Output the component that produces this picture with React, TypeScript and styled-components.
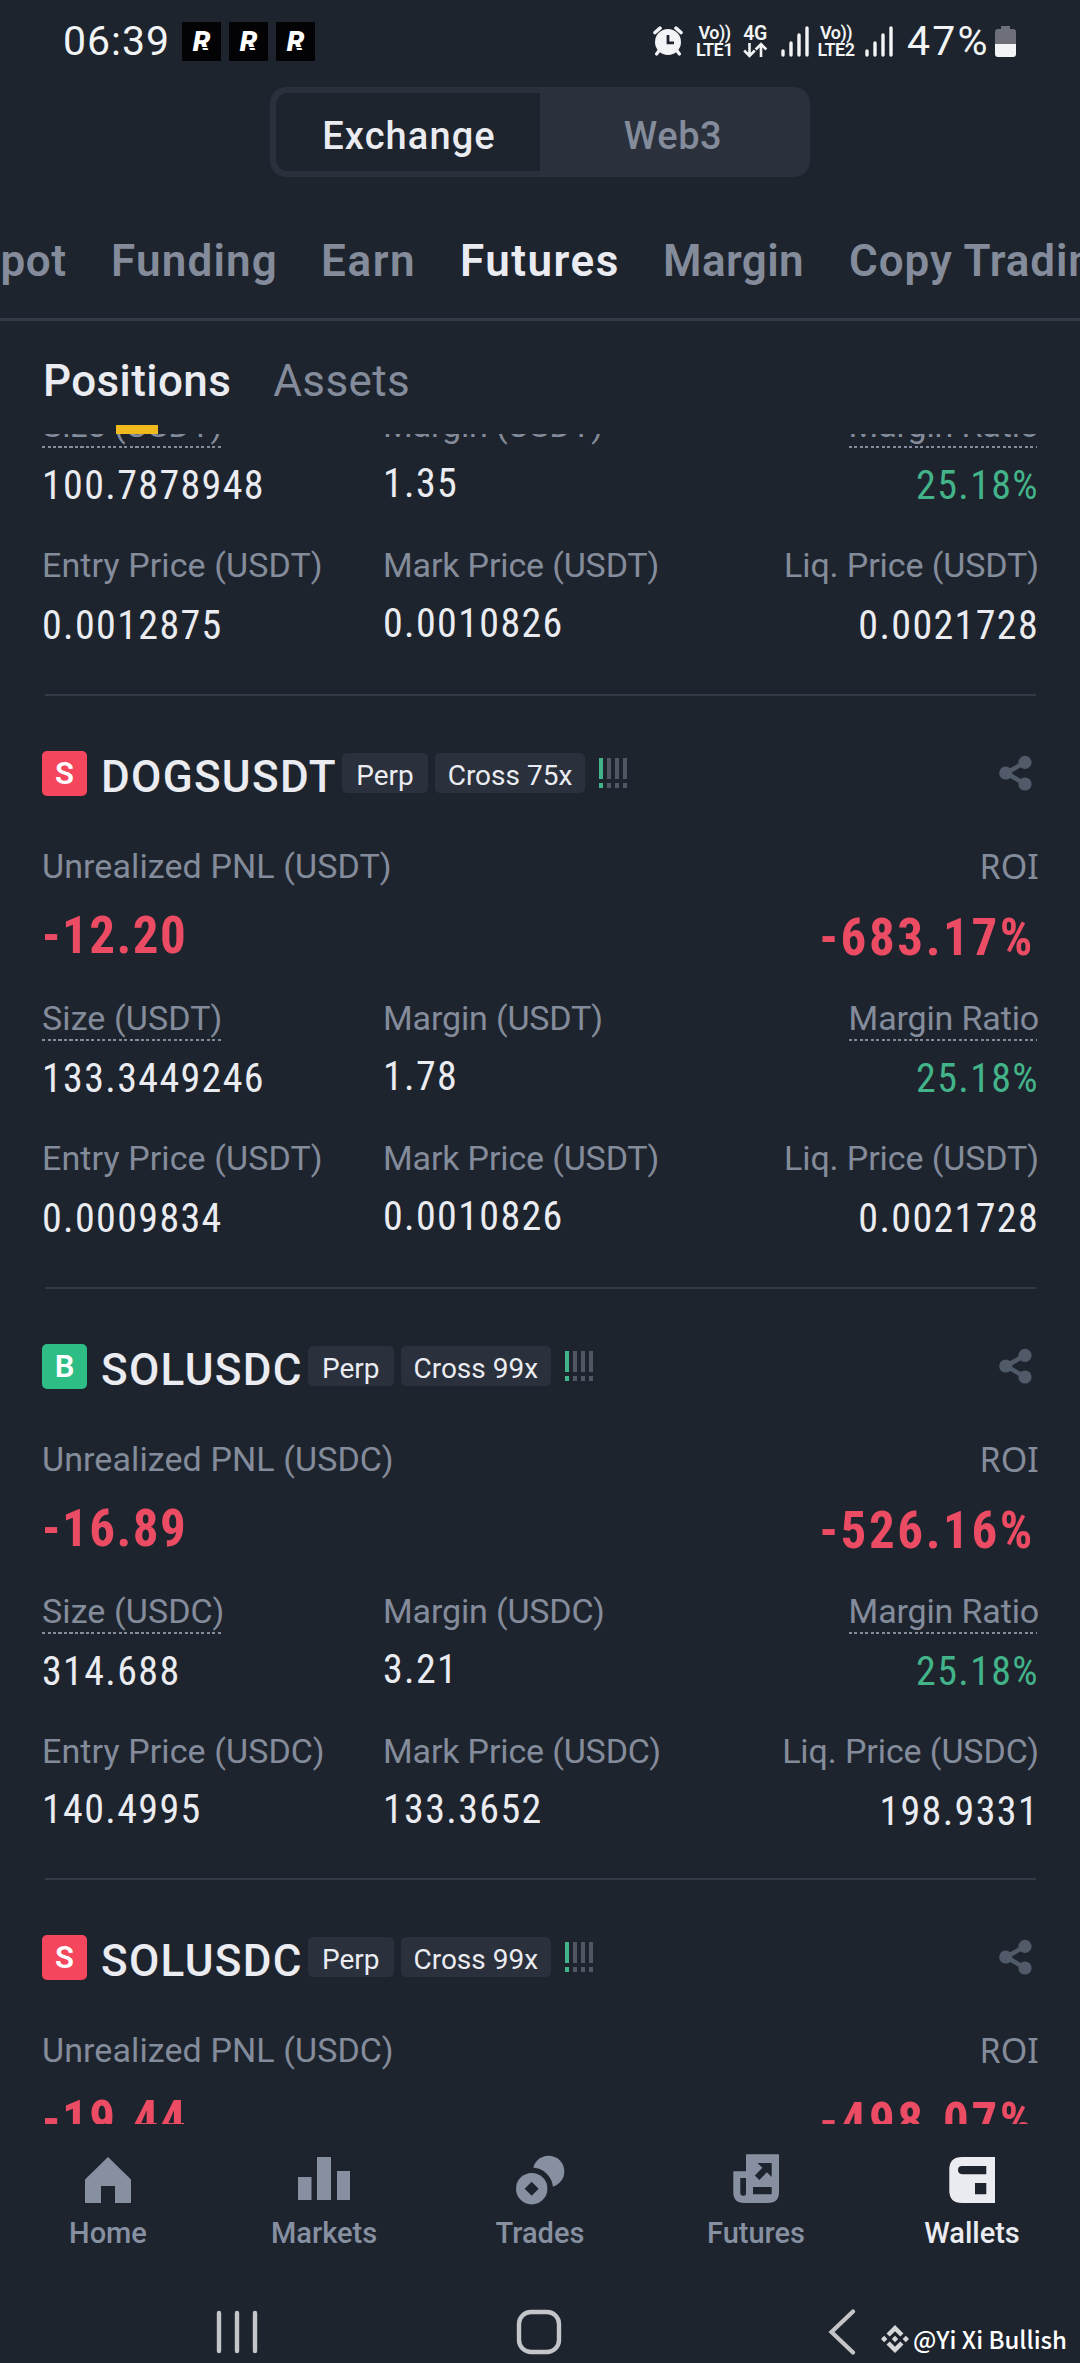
import React from 'react';
import styled, { createGlobalStyle } from 'styled-components';

const color = {
  bg: '#1e242e',
  panel: '#2a303c',
  text: '#eaecf1',
  muted: '#848c9b',
  line: '#343b47',
  hairline: '#323a45',
  red: '#f6465d',
  redText: '#ec4c63',
  green: '#2ebd85',
  greenText: '#43b489',
  yellow: '#f0b91e',
  icon: '#8690a1',
};

const GlobalStyle = createGlobalStyle`
  * { box-sizing: border-box; }
  body {
    margin: 0;
    background: ${color.bg};
    color: ${color.text};
    font-family: Roboto, "Open Sans", sans-serif;
  }
`;

const Screen = styled.div`
  position: relative;
  width: 1080px;
  height: 2363px;
  display: flex;
  flex-direction: column;
  overflow: hidden;
  background: ${color.bg};
  white-space: nowrap;
`;

/* ---------- status bar ---------- */

const StatusBar = styled.header`
  flex: none;
  height: 82px;
  display: flex;
  align-items: center;
  justify-content: space-between;
  padding: 0 64px 0 63px;
  color: #f2f4f5;
`;

const StatusGroup = styled.div`
  display: flex;
  align-items: center;
`;

const Clock = styled.span`
  width: 119px;
  font-size: 41px;
  line-height: 50px;
  letter-spacing: 1px;
`;

const AppBadges = styled.div`
  display: flex;
  gap: 8px;
`;

const AppBadge = styled.span`
  position: relative;
  width: 39px;
  height: 39px;
  display: flex;
  align-items: center;
  justify-content: center;
  background: #030305;
  color: #fff;
  font: italic 900 28px/39px Roboto, sans-serif;

  &::after {
    content: '';
    position: absolute;
    left: 18px;
    top: 25px;
    width: 11px;
    height: 6px;
    background: repeating-linear-gradient(#030305 0 1.5px, transparent 1.5px 3px);
  }
`;

const Network = styled.span<{ $w: number; $ml: number }>`
  display: flex;
  flex-direction: column;
  align-items: center;
  width: ${p => p.$w}px;
  margin-left: ${p => p.$ml}px;
  font-size: 18px;
  font-weight: 600;
  line-height: 17px;
  letter-spacing: -0.5px;
`;

const NetworkTop = styled.span<{ $big?: boolean }>`
  font-size: ${p => (p.$big ? 19.5 : 18)}px;
`;

const Drawing = styled.svg<{ $ml?: number }>`
  display: block;
  flex: none;
  margin-left: ${p => p.$ml ?? 0}px;
`;

const Percent = styled.span`
  width: 81px;
  margin-left: 14px;
  font-size: 41px;
  line-height: 50px;
  letter-spacing: 2.2px;
`;

/* ---------- top navigation ---------- */

const Segmented = styled.div`
  flex: none;
  display: flex;
  width: 540px;
  height: 90px;
  margin: 5px auto 0;
  padding: 6px;
  border-radius: 16px;
  background: ${color.panel};
`;

const Segment = styled.span<{ $active?: boolean }>`
  flex: 1;
  display: flex;
  align-items: center;
  justify-content: center;
  padding: 8px 0 0 2px;
  border-radius: 12px ${p => (p.$active ? '0 0' : '12px 12px')} 12px;
  background: ${p => (p.$active ? color.bg : 'transparent')};
  color: ${p => (p.$active ? color.text : color.muted)};
  font-size: 38px;
  font-weight: 500;
  letter-spacing: ${p => (p.$active ? 1.1 : 0.6)}px;
`;

const Tabs = styled.nav`
  flex: none;
  display: flex;
  height: 144px;
  padding-top: 53px;
  border-bottom: 3px solid ${color.line};
  overflow: hidden;
`;

const Tab = styled.span<{ $w: number; $ls: number; $active?: boolean }>`
  flex: none;
  width: ${p => p.$w}px;
  font-size: 44px;
  font-weight: 600;
  line-height: 62px;
  letter-spacing: ${p => p.$ls}px;
  color: ${p => (p.$active ? color.text : color.muted)};

  &:first-child {
    margin-left: -27px;
  }
`;

const SubTabs = styled.nav`
  flex: none;
  display: flex;
  gap: 42px;
  height: 113px;
  padding: 30px 0 0 43px;
`;

const SubTab = styled.span<{ $active?: boolean }>`
  display: flex;
  flex-direction: column;
  align-items: center;
  font-size: 44px;
  font-weight: ${p => (p.$active ? 500 : 400)};
  line-height: 60px;
  letter-spacing: 0.4px;
  color: ${p => (p.$active ? color.text : color.muted)};

  &::after {
    content: '';
    width: 42px;
    height: 9px;
    margin-top: 14px;
    background: ${p => (p.$active ? color.yellow : 'transparent')};
  }
`;

/* ---------- positions ---------- */

const List = styled.main`
  flex: none;
  height: 1690px;
  padding: 0 41px 0 42px;
  overflow: hidden;
`;

const Scrolled = styled.div`
  margin-top: -31px;
`;

const Card = styled.section<{ $partial?: boolean; $tight?: boolean }>`
  display: flex;
  flex-direction: column;
  padding: ${p => (p.$partial ? 0 : 55)}px 0 ${p => (p.$tight ? 46 : 48)}px;
  background: linear-gradient(${color.hairline}, ${color.hairline}) 3px 100% / 991px 2px no-repeat;
  border-bottom: 1px solid transparent;
  background-origin: border-box;
  background-clip: border-box;
`;

const CardHeader = styled.div`
  display: flex;
  height: 45px;
`;

const Side = styled.span<{ $buy: boolean }>`
  width: 45px;
  height: 45px;
  border-radius: 5px;
  background: ${p => (p.$buy ? color.green : color.red)};
  color: #fff;
  font-size: 31px;
  font-weight: 600;
  line-height: 46px;
  text-align: center;
`;

const Symbol = styled.h2`
  margin: 0 5px 0 14px;
  font-size: 44px;
  font-weight: 500;
  line-height: 52px;
  letter-spacing: 1.3px;
`;

const Tag = styled.span<{ $w: number }>`
  width: ${p => p.$w}px;
  height: 40px;
  margin: 2px 7px 0 0;
  border-radius: 5px;
  background: ${color.panel};
  font-size: 28px;
  line-height: 45px;
  text-align: center;
`;

const Risk = styled.span`
  display: flex;
  gap: 4px;
  margin: 7px 0 0 7px;
`;

const RiskBar = styled.i<{ $on?: boolean }>`
  width: 4px;
  height: 30px;
  background: linear-gradient(
    ${p => (p.$on ? color.greenText : '#505662')} 0 21px,
    transparent 21px 25px,
    ${p => (p.$on ? color.greenText : '#505662')} 25px
  );
`;

const ShareSlot = styled.span`
  margin: 4px 7px 0 auto;
`;

const Between = styled.div<{ $mt: number; $h: number }>`
  display: flex;
  justify-content: space-between;
  height: ${p => p.$h}px;
  margin-top: ${p => p.$mt}px;
`;

const Label = styled.span<{ $dotted?: boolean; $serifI?: boolean; $ls?: number }>`
  position: relative;
  height: 44px;
  color: ${color.muted};
  font-size: 34px;
  line-height: 45px;
  letter-spacing: ${p => p.$ls ?? 0.1}px;
  font-family: ${p => (p.$serifI ? '"Noto Sans"' : 'Roboto')}, sans-serif;

  &::after {
    content: '';
    position: absolute;
    left: 0;
    right: 2px;
    bottom: -1px;
    height: 2px;
    background: ${p =>
      p.$dotted ? `repeating-linear-gradient(90deg, ${color.muted} 0 3px, transparent 3px 5.5px)` : 'none'};
  }
`;

const Pnl = styled.strong<{ $right?: boolean }>`
  padding: ${p => (p.$right ? '2px 4px 0 0' : '0')};
  color: ${color.redText};
  font-family: "Roboto Condensed", Roboto, sans-serif;
  font-size: 51px;
  font-weight: 700;
  line-height: 62px;
  letter-spacing: ${p => (p.$right ? 2.6 : 1.5)}px;
`;

const Stats = styled.div<{ $mt: number }>`
  display: grid;
  grid-template-columns: 341px 1fr auto;
  margin-top: ${p => p.$mt}px;
`;

const Stat = styled.div<{ $right?: boolean }>`
  display: flex;
  flex-direction: column;
  align-items: ${p => (p.$right ? 'flex-end' : 'flex-start')};
`;

const Value = styled.span<{ $gap: number; $good?: boolean }>`
  height: 44px;
  margin-top: ${p => p.$gap}px;
  color: ${p => (p.$good ? color.greenText : color.text)};
  font-family: "Roboto Condensed", Roboto, sans-serif;
  font-size: 40px;
  line-height: 46px;
  letter-spacing: 1.35px;
`;

/* ---------- bottom bars ---------- */

const BottomNav = styled.nav`
  flex: none;
  display: grid;
  grid-template-columns: repeat(5, 1fr);
  height: 164px;
  padding-top: 29px;
`;

const NavItem = styled.span<{ $active?: boolean }>`
  display: flex;
  flex-direction: column;
  align-items: center;
  gap: 10px;
  color: ${p => (p.$active ? color.text : color.icon)};
  font-size: 29px;
  font-weight: 500;
  line-height: 37px;
`;

const SystemNav = styled.footer`
  flex: none;
  display: flex;
  align-items: center;
  height: 88px;
  padding-left: 216px;
`;

const Watermark = styled.div`
  position: absolute;
  right: 13px;
  bottom: 4px;
  display: flex;
  align-items: center;
  gap: 4px;
  color: #fff;
  font: 500 24px/40px "Noto Sans CJK SC", "Noto Sans", sans-serif;
`;

/* ---------- icons ---------- */

const AlarmIcon = () => (
  <Drawing width="30" height="30" viewBox="0 0 30 30">
    <g stroke="#f2f4f5" strokeLinecap="round" fill="none">
      <path d="M2 6.5 L7 2.2 M28 6.5 L23 2.2" strokeWidth="3.6" />
      <path d="M6.5 24 L3.6 28 M23.5 24 L26.4 28" strokeWidth="3.2" />
    </g>
    <circle cx="15" cy="16" r="13" fill="#f2f4f5" />
    <path d="M15 9 V16.8 H21" fill="none" stroke={color.bg} strokeWidth="2.8" />
  </Drawing>
);

const DataArrows = () => (
  <Drawing width="25" height="16" viewBox="0 0 25 16">
    <path
      d="M6.5 1 V13.5 M1.2 8.5 L6.5 14 L11.8 8.5 M18 15 V2.5 M12.7 7.5 L18 2 L23.3 7.5"
      fill="none"
      stroke="#f2f4f5"
      strokeWidth="2.6"
    />
  </Drawing>
);

const SignalIcon = ({ ml }: { ml: number }) => (
  <Drawing $ml={ml} width="28" height="31" viewBox="0 0 28 31">
    <path
      d="M2 25 V29 M10 17 V29 M18 9 V29 M26 2 V29"
      stroke="#f2f4f5"
      strokeWidth="3.4"
      strokeLinecap="round"
    />
  </Drawing>
);

const BatteryIcon = () => (
  <Drawing $ml={7} width="21" height="32" viewBox="0 0 21 32">
    <path d="M6 1 H15 V4 H18 Q21 4 21 7 V19 H0 V7 Q0 4 3 4 H6 Z" fill="#6d7079" />
    <path d="M0 19 H21 V29 Q21 32 18 32 H3 Q0 32 0 29 Z" fill="#f2f4f5" />
  </Drawing>
);

const ShareIcon = () => (
  <Drawing width="33" height="37" viewBox="0 0 33 37">
    <path d="M26 7.5 L7 18 L26 29" fill="none" stroke="#505a68" strokeWidth="4.6" />
    <circle cx="6.8" cy="18" r="6.6" fill="#505a68" />
    <circle cx="26" cy="7.3" r="6.6" fill="#505a68" />
    <circle cx="26" cy="29" r="6.6" fill="#505a68" />
  </Drawing>
);

const HomeIcon = () => <path d="M26 4 L49 26.5 V50 H33 V33 H19 V50 H3 V26.5 Z" fill="currentColor" />;

const MarketsIcon = () => (
  <path d="M0 24 H13.5 V47 H0 Z M19 4 H33 V47 H19 Z M39 18 H52 V47 H39 Z" fill="currentColor" />
);

const TradesIcon = () => (
  <>
    <circle cx="34.6" cy="18.4" r="15.7" fill="currentColor" />
    <circle cx="17.7" cy="35.7" r="21.3" fill={color.bg} />
    <circle cx="17.7" cy="35.7" r="15.7" fill="currentColor" />
    <path d="M17.7 28.7 L24.7 35.7 L17.7 42.7 L10.7 35.7 Z" fill={color.bg} />
  </>
);

const FuturesIcon = () => (
  <>
    <path d="M16 1.3 H49 V39 Q49 50 38 50 H14 Q3.3 50 3.3 39 V18.3 H16 Z" fill="currentColor" />
    <path
      d="M16 25 H10.3 V40 Q10.3 42.7 13 42.7 H14 Q16 42.7 16 40.5 Z M23 34 H41.7 V41.3 H23 Z M27.5 10 H41.7 V24 L36.9 19.3 L29.3 27 L24.8 22.5 L32.4 14.8 Z"
      fill={color.bg}
    />
  </>
);

const WalletsIcon = () => (
  <>
    <path d="M16 4 H49 V50 H16 Q3.3 50 3.3 37.5 V16.5 Q3.3 4 16 4 Z" fill="currentColor" />
    <path d="M16 13 H40.3 V21.2 H16 Q12 21.2 12 17.1 Q12 13 16 13 Z M29 30 H40.3 V41.2 H29 Z" fill={color.bg} />
  </>
);

const BinanceMark = () => (
  <Drawing width="28" height="28" viewBox="0 0 28 28" fill="#d6d7d9">
    <path d="M14 0 L22.5 8.5 L19.3 11.6 L14 6.3 L8.7 11.6 L5.5 8.5 Z" />
    <path d="M14 28 L22.5 19.5 L19.3 16.4 L14 21.7 L8.7 16.4 L5.5 19.5 Z" />
    <path d="M14 10.8 L17.2 14 L14 17.2 L10.8 14 Z M3.2 10.8 L6.4 14 L3.2 17.2 L0 14 Z M24.8 10.8 L28 14 L24.8 17.2 L21.6 14 Z" />
  </Drawing>
);

/* ---------- data ---------- */

interface Position {
  symbol?: string;
  coin: string;
  buy?: boolean;
  leverage?: string;
  pnl?: string;
  roi?: string;
  size?: string;
  margin?: string;
  entry?: string;
  mark?: string;
  liq?: string;
  tight?: boolean;
}

const positions: Position[] = [
  { coin: 'USDT', size: '100.7878948', margin: '1.35', entry: '0.0012875', mark: '0.0010826', liq: '0.0021728' },
  {
    symbol: 'DOGSUSDT', coin: 'USDT', buy: false, leverage: '75x', pnl: '-12.20', roi: '-683.17%',
    size: '133.3449246', margin: '1.78', entry: '0.0009834', mark: '0.0010826', liq: '0.0021728',
  },
  {
    symbol: 'SOLUSDC', coin: 'USDC', buy: true, leverage: '99x', pnl: '-16.89', roi: '-526.16%',
    size: '314.688', margin: '3.21', entry: '140.4995', mark: '133.3652', liq: '198.9331', tight: true,
  },
  { symbol: 'SOLUSDC', coin: 'USDC', buy: false, leverage: '99x', pnl: '-19.44', roi: '-498.07%' },
];

const tabs = [
  { name: 'Spot', w: 138, ls: 0.6 },
  { name: 'Funding', w: 210, ls: 1.2 },
  { name: 'Earn', w: 139, ls: 1.6 },
  { name: 'Futures', w: 203, ls: 1.5, active: true },
  { name: 'Margin', w: 186, ls: 0.4 },
  { name: 'Copy Trading', w: 300, ls: 0.9 },
];

const navItems = [
  { name: 'Home', Icon: HomeIcon },
  { name: 'Markets', Icon: MarketsIcon },
  { name: 'Trades', Icon: TradesIcon },
  { name: 'Futures', Icon: FuturesIcon },
  { name: 'Wallets', Icon: WalletsIcon, active: true },
];

const PositionCard = ({ p }: { p: Position }) => {
  const lastGap = p.tight ? 14 : 16;
  return (
    <Card $partial={!p.symbol} $tight={p.tight}>
      {p.symbol && (
        <>
          <CardHeader>
            <Side $buy={!!p.buy}>{p.buy ? 'B' : 'S'}</Side>
            <Symbol>{p.symbol}</Symbol>
            <Tag $w={86}>Perp</Tag>
            <Tag $w={150}>Cross {p.leverage}</Tag>
            <Risk>
              <RiskBar $on />
              <RiskBar />
              <RiskBar />
              <RiskBar />
            </Risk>
            <ShareSlot>
              <ShareIcon />
            </ShareSlot>
          </CardHeader>
          <Between $mt={48} $h={44}>
            <Label>Unrealized PNL ({p.coin})</Label>
            <Label $serifI>ROI</Label>
          </Between>
          <Between $mt={17} $h={60}>
            <Pnl>{p.pnl}</Pnl>
            <Pnl $right>{p.roi}</Pnl>
          </Between>
        </>
      )}
      {p.size && (
        <>
          <Stats $mt={p.symbol ? 31 : 0}>
            <Stat>
              <Label $dotted>Size ({p.coin})</Label>
              <Value $gap={16}>{p.size}</Value>
            </Stat>
            <Stat>
              <Label $ls={-0.15}>Margin ({p.coin})</Label>
              <Value $gap={14}>{p.margin}</Value>
            </Stat>
            <Stat $right>
              <Label $dotted $ls={-0.15}>Margin Ratio</Label>
              <Value $gap={16} $good>25.18%</Value>
            </Stat>
          </Stats>
          <Stats $mt={36}>
            <Stat>
              <Label>Entry Price ({p.coin})</Label>
              <Value $gap={lastGap}>{p.entry}</Value>
            </Stat>
            <Stat>
              <Label $ls={-0.15}>Mark Price ({p.coin})</Label>
              <Value $gap={14}>{p.mark}</Value>
            </Stat>
            <Stat $right>
              <Label $ls={-0.1}>Liq. Price ({p.coin})</Label>
              <Value $gap={16}>{p.liq}</Value>
            </Stat>
          </Stats>
        </>
      )}
    </Card>
  );
};

export default function App() {
  return (
    <Screen>
      <GlobalStyle />
      <StatusBar>
        <StatusGroup>
          <Clock>06:39</Clock>
          <AppBadges>
            <AppBadge>R</AppBadge>
            <AppBadge>R</AppBadge>
            <AppBadge>R</AppBadge>
          </AppBadges>
        </StatusGroup>
        <StatusGroup>
          <AlarmIcon />
          <Network $w={39} $ml={12}>
            <NetworkTop>Vo))</NetworkTop>
            <span>LTE1</span>
          </Network>
          <Network $w={26} $ml={8}>
            <NetworkTop $big>4G</NetworkTop>
            <DataArrows />
          </Network>
          <SignalIcon ml={13} />
          <Network $w={40} $ml={7}>
            <NetworkTop>Vo))</NetworkTop>
            <span>LTE2</span>
          </Network>
          <SignalIcon ml={9} />
          <Percent>47%</Percent>
          <BatteryIcon />
        </StatusGroup>
      </StatusBar>

      <Segmented>
        <Segment $active>Exchange</Segment>
        <Segment>Web3</Segment>
      </Segmented>

      <Tabs>
        {tabs.map(t => (
          <Tab key={t.name} $w={t.w} $ls={t.ls} $active={t.active}>
            {t.name}
          </Tab>
        ))}
      </Tabs>

      <SubTabs>
        <SubTab $active>Positions</SubTab>
        <SubTab>Assets</SubTab>
      </SubTabs>

      <List>
        <Scrolled>
          {positions.map((p, i) => (
            <PositionCard key={i} p={p} />
          ))}
        </Scrolled>
      </List>

      <BottomNav>
        {navItems.map(({ name, Icon, active }) => (
          <NavItem key={name} $active={active}>
            <Drawing width="52" height="52" viewBox="0 0 52 52">
              <Icon />
            </Drawing>
            {name}
          </NavItem>
        ))}
      </BottomNav>

      <SystemNav>
        <Drawing width="42" height="44" viewBox="0 0 42 44">
          <path d="M3 3 V41 M21 3 V41 M39 3 V41" stroke="#c3c5c9" strokeWidth="4.4" strokeLinecap="round" />
        </Drawing>
        <Drawing $ml={258} width="46" height="46" viewBox="0 0 46 46">
          <rect x="3" y="3" width="40" height="40" rx="12" fill="none" stroke="#c3c5c9" strokeWidth="4.4" />
        </Drawing>
        <Drawing $ml={266} width="28" height="46" viewBox="0 0 28 46">
          <path d="M25 2.5 L3.5 23 L25 43.5" fill="none" stroke="#c3c5c9" strokeWidth="4.2" strokeLinecap="round" />
        </Drawing>
      </SystemNav>

      <Watermark>
        <BinanceMark />
        <span>@Yi Xi Bullish</span>
      </Watermark>
    </Screen>
  );
}
